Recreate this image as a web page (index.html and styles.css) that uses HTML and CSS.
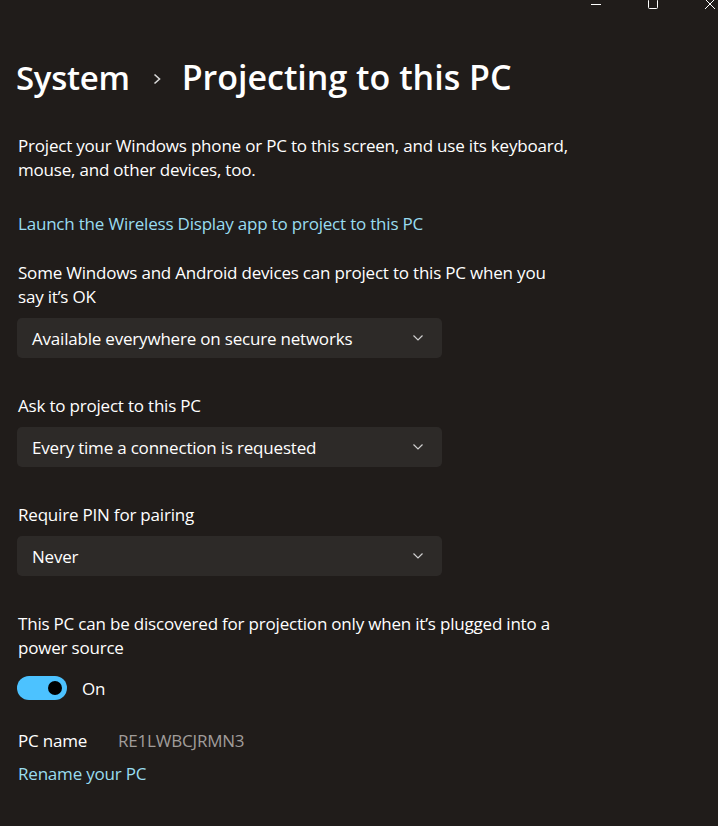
FILE: index.html
```html
<!DOCTYPE html>
<html lang="en">
<head>
    <meta charset="UTF-8">
    <title>Projecting to this PC</title>
    <link rel="stylesheet" href="styles.css">
</head>
<body>

    <div class="caption">
        <span class="cap-btn">
            <svg width="12" height="12" viewBox="0 0 12 12"><path d="M1 6.5h10" stroke="#fff" stroke-width="1"/></svg>
        </span>
        <span class="cap-btn">
            <svg width="12" height="12" viewBox="0 0 12 12"><rect x="1.5" y="1.5" width="9" height="9" rx="1" fill="none" stroke="#fff" stroke-width="1"/></svg>
        </span>
        <span class="cap-btn close">
            <svg width="12" height="12" viewBox="0 0 12 12"><path d="M1 1l10 10M11 1L1 11" stroke="#fff" stroke-width="1"/></svg>
        </span>
    </div>

    <div class="page">
        <h1 class="crumbs">
            <span class="crumb-parent">System</span>
            <svg class="crumb-sep" width="12" height="14" viewBox="0 0 12 14"><path d="M3.5 2.5l5 4.5-5 4.5" fill="none" stroke="#d8d8d8" stroke-width="1.6"/></svg>
            <span class="crumb-current">Projecting to this PC</span>
        </h1>

        <p class="intro">Project your Windows phone or PC to this screen, and use its keyboard, mouse, and other devices, too.</p>

        <a class="link launch" href="#">Launch the Wireless Display app to project to this PC</a>

        <div class="setting">
            <div class="label">Some Windows and Android devices can project to this PC when you say it’s OK</div>
            <div class="combo">
                <span>Available everywhere on secure networks</span>
                <svg width="12" height="8" viewBox="0 0 12 8"><path d="M1.5 1.5l4.5 4.5 4.5-4.5" fill="none" stroke="#cfcfcf" stroke-width="1.2"/></svg>
            </div>
        </div>

        <div class="setting">
            <div class="label">Ask to project to this PC</div>
            <div class="combo">
                <span>Every time a connection is requested</span>
                <svg width="12" height="8" viewBox="0 0 12 8"><path d="M1.5 1.5l4.5 4.5 4.5-4.5" fill="none" stroke="#cfcfcf" stroke-width="1.2"/></svg>
            </div>
        </div>

        <div class="setting">
            <div class="label">Require PIN for pairing</div>
            <div class="combo">
                <span>Never</span>
                <svg width="12" height="8" viewBox="0 0 12 8"><path d="M1.5 1.5l4.5 4.5 4.5-4.5" fill="none" stroke="#cfcfcf" stroke-width="1.2"/></svg>
            </div>
        </div>

        <div class="setting power">
            <div class="label">This PC can be discovered for projection only when it’s plugged into a power source</div>
            <div class="toggle-row">
                <span class="toggle"><span class="knob"></span></span>
                <span>On</span>
            </div>
        </div>

        <div class="name-row">
            <span class="name-label">PC name</span>
            <span class="name-value">RE1LWBCJRMN3</span>
        </div>
        <a class="link rename" href="#">Rename your PC</a>
    </div>

</body>
</html>
```

FILE: styles.css
```css
body {
    margin: 0;
    background-color: #201c1a;
    color: #ffffff;
    font-family: "Open Sans", "Noto Sans", sans-serif;
    font-size: 17px;
    letter-spacing: -0.2px;
    height: 826px;
    overflow: hidden;
}

.caption {
    display: flex;
    justify-content: flex-end;
    height: 12px;
    margin-right: -20px;
}

.cap-btn {
    width: 57px;
    display: flex;
    justify-content: center;
    align-items: flex-start;
    margin-top: -2px;
}

.page {
    padding: 0 16px;
    width: 556px;
}

.crumbs {
    display: flex;
    align-items: center;
    margin: 43px 0 0 0;
    font-size: 33px;
    font-weight: 600;
    letter-spacing: -0.3px;
    height: 44px;
}

.crumb-current {
    font-size: 34px;
    letter-spacing: 0;
}

.crumb-sep {
    margin: 4px 19px 0 21px;
}

.intro {
    margin: 35px 0 0 2px;
    line-height: 24px;
}

.link {
    display: block;
    color: #99dcf0;
    text-decoration: none;
    margin-left: 2px;
}

.launch {
    margin-top: 30px;
    line-height: 24px;
}

.setting {
    margin-top: 25px;
}

.setting + .setting {
    margin-top: 36px;
}

.setting.power {
    margin-top: 36px;
}

.label {
    margin-left: 2px;
    line-height: 24px;
}

.combo {
    margin-top: 9px;
    width: 425px;
    height: 40px;
    box-sizing: border-box;
    margin-left: 1px;
    padding: 0 18px 0 15px;
    background-color: #2d2a28;
    border-radius: 5px;
    display: flex;
    align-items: center;
    justify-content: space-between;
}

.toggle-row {
    display: flex;
    align-items: center;
    gap: 15px;
    margin-top: 16px;
    margin-left: 1px;
}

.toggle {
    width: 50px;
    height: 24px;
    border-radius: 12px;
    background-color: #4cc2ff;
    display: flex;
    align-items: center;
    justify-content: flex-end;
    padding-right: 5px;
    box-sizing: border-box;
}

.knob {
    width: 14px;
    height: 14px;
    border-radius: 50%;
    background-color: #000;
}

.name-row {
    display: flex;
    margin-top: 29px;
    margin-left: 2px;
    line-height: 24px;
}

.name-label {
    width: 100px;
}

.name-value {
    color: #a09c9a;
}

.rename {
    margin-top: 9px;
    line-height: 24px;
}
```
